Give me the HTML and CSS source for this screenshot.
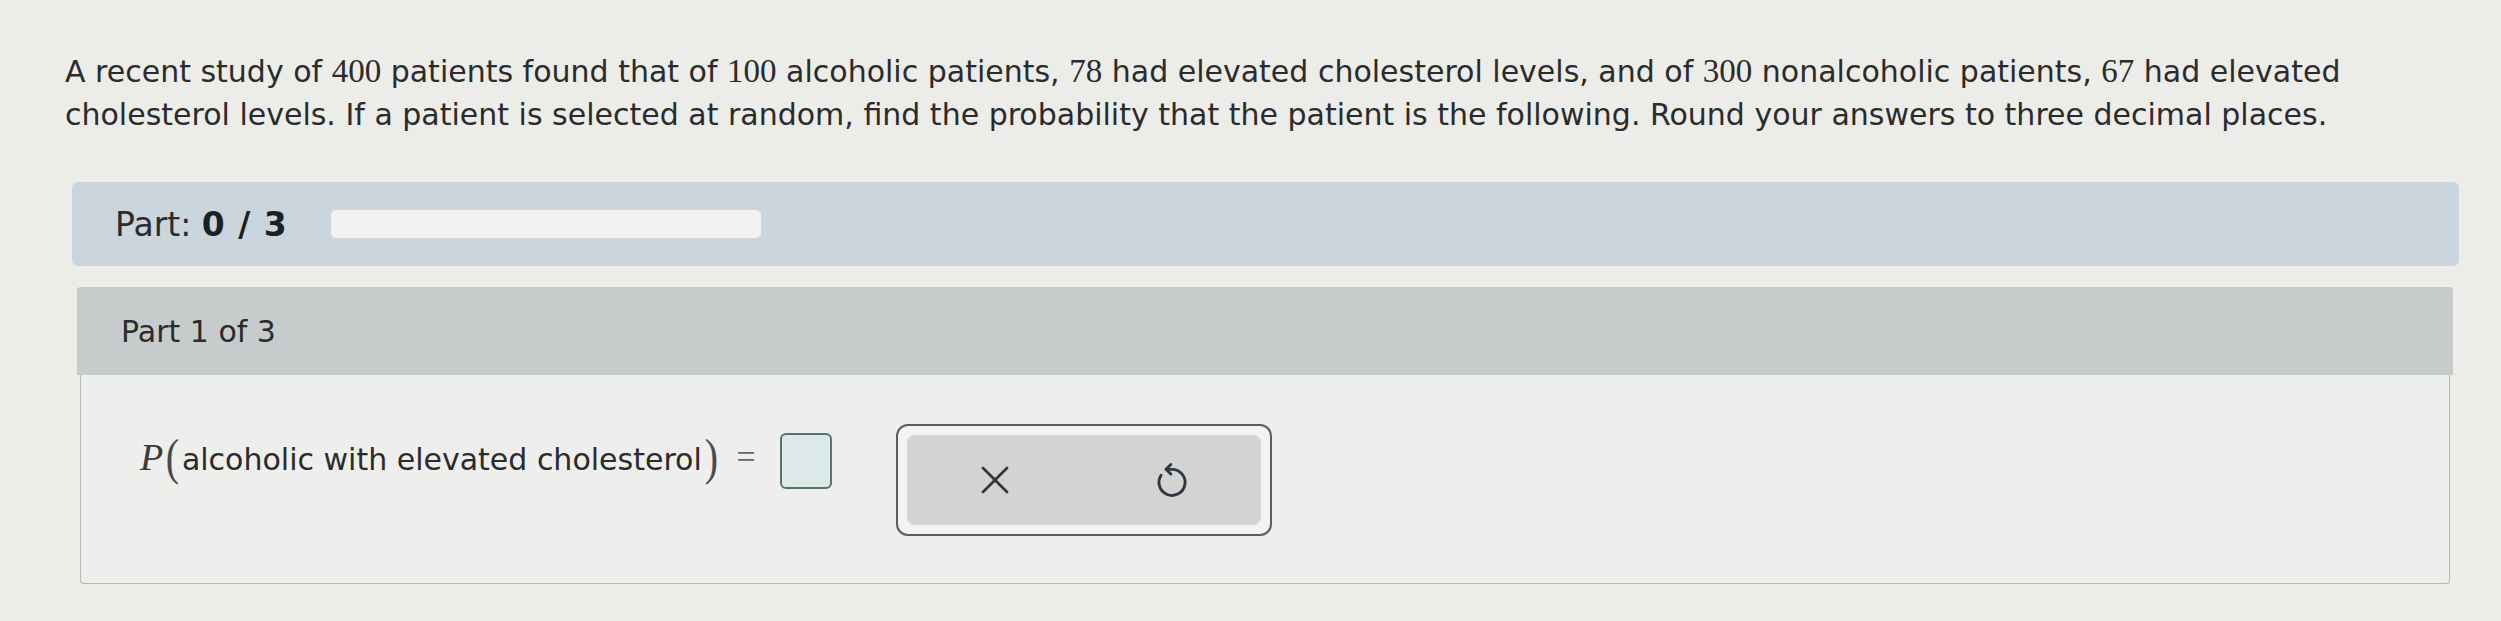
FILE: index.html
```html
<!DOCTYPE html>
<html lang="en">
<head>
<meta charset="utf-8">
<title>Probability question</title>
<link rel="stylesheet" href="styles.css">
</head>
<body>
<main class="page">
  <p class="question">A recent study of <span class="num">400</span> patients found that of <span class="num">100</span> alcoholic patients, <span class="num">78</span> had elevated cholesterol levels, and of <span class="num">300</span> nonalcoholic patients, <span class="num">67</span> had elevated <span class="tail">cholesterol levels. If a patient is selected at random, find the probability that the patient is the following. Round your answers to three decimal places.</span></p>

  <section class="progress-bar">
    <span class="progress-label">Part: <b>0 / 3</b></span>
    <span class="progress-track"></span>
  </section>

  <section class="part">
    <header class="part-head">Part 1 of 3</header>
    <div class="part-body">
      <div class="eq-row">
        <span class="math">
          <span class="var">P</span><span class="paren">(</span><span class="mtext">alcoholic with elevated cholesterol</span><span class="paren">)</span><span class="eq">=</span>
        </span>
        <span class="answer-box"></span>
        <div class="tools">
          <div class="tools-inner">
            <button class="tool" type="button" aria-label="Clear">
              <svg width="30" height="30" viewBox="0 0 30 30"><path d="M3 3 L27 27 M27 3 L3 27" fill="none" stroke="#2e3742" stroke-width="2.8" stroke-linecap="round"/></svg>
            </button>
            <button class="tool" type="button" aria-label="Undo">
              <svg width="38" height="38" viewBox="0 0 32 32"><path d="M11 7 H16 A11 11 0 1 1 6.8 12" fill="none" stroke="#2e3742" stroke-width="2.4" stroke-linecap="round"/><path d="M15 3 L11 7 L15 11" fill="none" stroke="#2e3742" stroke-width="2.4" stroke-linecap="round" stroke-linejoin="round"/></svg>
            </button>
          </div>
        </div>
      </div>
    </div>
  </section>
</main>
</body>
</html>
```

FILE: styles.css
```css
html, body {
  margin: 0;
  padding: 0;
  background: #ecece9;
}

.page {
  padding-top: 50px;
  font-family: "DejaVu Sans", Verdana, sans-serif;
  color: #2b2b2b;
}

.question {
  margin: 0 0 0 65px;
  width: 2360px;
  font-size: 30px;
  line-height: 43px;
}

.tail {
  display: inline-block;
}

.num {
  font-family: "Liberation Serif", "Times New Roman", serif;
  font-size: 33px;
  line-height: 1;
}

.progress-bar {
  margin: 46px 0 0 72px;
  width: 2387px;
  height: 84px;
  background: #cad5de;
  border-radius: 6px;
  display: flex;
  align-items: center;
  padding-left: 43px;
  box-sizing: border-box;
  font-size: 33px;
}

.progress-label b {
  font-weight: bold;
  color: #1f1f1f;
  letter-spacing: 1px;
}

.progress-track {
  margin-left: 43px;
  width: 430px;
  height: 28px;
  background: #f1f1ef;
  border-radius: 5px;
}

.part {
  margin: 21px 0 0 77px;
  width: 2376px;
}

.part-head {
  height: 88px;
  background: #c6cbcb;
  border-radius: 4px 4px 0 0;
  display: flex;
  align-items: center;
  padding-left: 44px;
  font-size: 30px;
}

.part-body {
  height: 209px;
  box-sizing: border-box;
  margin: 0 3px;
  background: #eeeeec;
  border: 1px solid #b7b7b5;
  border-top: none;
  border-radius: 0 0 4px 4px;
  padding: 49px 0 0 59px;
}

.eq-row {
  display: flex;
  align-items: flex-start;
}

.math {
  margin-top: 10px;
  display: flex;
  align-items: center;
  height: 46px;
  font-size: 30px;
}

.var {
  font-family: "Liberation Serif", "Times New Roman", serif;
  font-style: italic;
  font-size: 38px;
  color: #3a3a3a;
}

.paren {
  font-family: "Liberation Serif", "Times New Roman", serif;
  font-size: 50px;
  line-height: 46px;
  color: #4a4a4a;
  transform: scaleX(0.8);
  margin: 0 1px;
}

.mtext {
  padding-top: 4px;
}

.eq {
  font-family: "Liberation Serif", "Times New Roman", serif;
  font-size: 34px;
  color: #666;
  margin-left: 16px;
}

.answer-box {
  margin: 9px 0 0 24px;
  width: 52px;
  height: 56px;
  box-sizing: border-box;
  border: 2px solid #587272;
  border-radius: 6px;
  background: #dde8e9;
}

.tools {
  margin-left: 64px;
  width: 376px;
  height: 112px;
  box-sizing: border-box;
  border: 2px solid #5c5c5c;
  border-radius: 12px;
  background: #f3f3f2;
  padding: 9px;
}

.tools-inner {
  height: 100%;
  background: #d3d3d2;
  border-radius: 8px;
  display: flex;
}

.tool {
  flex: 1;
  border: none;
  background: transparent;
  padding: 0;
  display: flex;
  align-items: center;
  justify-content: center;
}

.tool svg {
  display: block;
}
```
